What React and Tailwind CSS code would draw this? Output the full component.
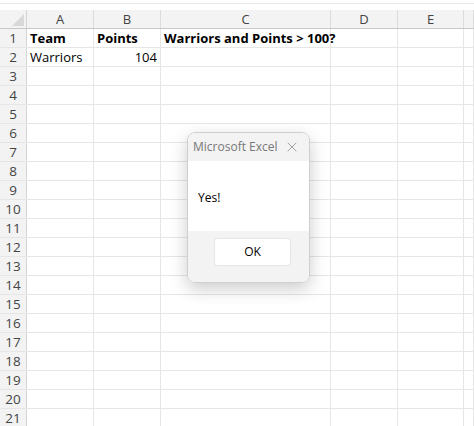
import { X } from 'lucide-react'

const cols = [
  { id: 'A', w: 'w-[67px]' },
  { id: 'B', w: 'w-[67px]' },
  { id: 'C', w: 'w-[170px]' },
  { id: 'D', w: 'w-[67px]' },
  { id: 'E', w: 'w-[66px]' },
  { id: '', w: 'flex-1' },
]

const data = {
  1: [
    <span className="font-bold">Team</span>,
    <span className="font-bold">Points</span>,
    <span className="font-bold">Warriors and Points &gt; 100?</span>,
  ],
  2: ['Warriors', <span className="block text-right">104</span>],
}

function Row({ n }) {
  const cells = data[n] || []
  return (
    <div className="flex h-[19px] border-b border-[#e6e6e6]">
      <div className="flex w-[27px] shrink-0 items-center justify-center border-r border-[#d4d4d4] bg-[#f3f3f3] text-[13.5px] text-[#444]">
        {n}
      </div>
      {cols.map((c, i) => (
        <div
          key={i}
          className={`${c.w} shrink-0 overflow-visible whitespace-nowrap border-r border-[#e6e6e6] px-[3px] text-[13px] leading-[18px] text-black`}
        >
          {cells[i]}
        </div>
      ))}
    </div>
  )
}

export default function App() {
  const rows = Array.from({ length: 22 }, (_, i) => i + 1)
  return (
    <div className="relative h-[426px] w-[474px] overflow-hidden bg-white font-['Open_Sans',sans-serif]">
      <div className="h-[10px] border-t-[3px] border-white">
        <div className="h-px bg-[#e8e8e8]" />
      </div>
      <div className="flex h-[19px] border-b border-[#c8c8c8] bg-[#f3f3f3]">
        <div className="relative w-[27px] shrink-0 border-r border-[#d4d4d4]">
          <div className="absolute bottom-[2px] right-[2px] h-0 w-0 border-b-[12px] border-l-[12px] border-b-[#d8d8d8] border-l-transparent" />
        </div>
        {cols.map((c, i) => (
          <div
            key={i}
            className={`${c.w} flex shrink-0 items-center justify-center border-r border-[#dcdcdc] pt-[1px] text-[13px] text-[#444]`}
          >
            {c.id}
          </div>
        ))}
      </div>
      {rows.map((n) => (
        <Row key={n} n={n} />
      ))}

      <div className="absolute left-[187px] top-[132px] w-[123px] overflow-hidden rounded-[8px] border border-[#cfcfcf] shadow-[0_6px_18px_rgba(0,0,0,0.2)]">
        <div className="flex h-[28px] items-center justify-between bg-[#f3f3f3] pl-[5px] pr-[9px] text-[12px] text-[#777]">
          <span>Microsoft Excel</span>
          <X size={16} strokeWidth={1} className="text-[#777]" />
        </div>
        <div className="flex h-[70px] items-center bg-white pl-[10px] pt-[3px] text-[12px] text-black">Yes!</div>
        <div className="h-[51px] bg-[#f3f3f3] pl-[27px] pt-[8px]">
          <div className="flex h-[26px] w-[75px] items-center justify-center rounded-[3px] bg-white text-[12px] text-black shadow-[0_0_0_1px_#e6e6e6]">
            OK
          </div>
        </div>
      </div>
    </div>
  )
}
